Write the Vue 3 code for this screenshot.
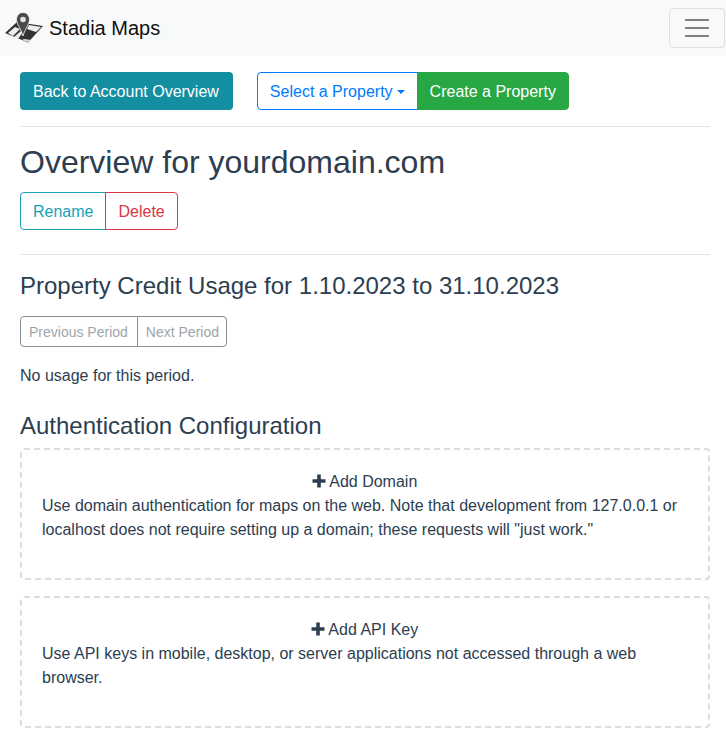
<script setup>
const cards = [
  { label: 'Add Domain', text: 'Use domain authentication for maps on the web. Note that development from 127.0.0.1 or localhost does not require setting up a domain; these requests will "just work."' },
  { label: 'Add API Key', text: 'Use API keys in mobile, desktop, or server applications not accessed through a web browser.' },
]
</script>

<template>
  <div class="page">
    <nav class="navbar">
      <a class="brand">
        <svg class="logo" width="40" height="34" viewBox="0 0 40 34">
          <path d="M13 11 L39 15 L24 31.500 L1 22 Z" fill="#333" />
          <path d="M4 22 L11 16 L16 18 L9 25 Z" fill="#eee" />
          <path d="M10 26 L17 20 L19 21 L14 28 Z" fill="#eee" />
          <path d="M25 14 L37 16 L32 21 L23 18 Z" fill="#eee" />
          <path d="M20 28 L27 29 L24 31 L18 29 Z" fill="#ddd" />
          <path d="M19 1.500 C15 1.500 12.500 5 12.500 8.500 C12.500 13 17 18 19 25 C21 18 25.500 13 25.500 8.500 C25.500 5 23 1.500 19 1.500 Z" fill="#4a4a4a" stroke="#f8f9fa" stroke-width="0.8" />
          <circle cx="19" cy="8.500" r="2.800" fill="#e4e4e4" />
        </svg>
        <span>Stadia Maps</span>
      </a>
      <button class="toggler" aria-label="Toggle navigation">
        <span class="bar"></span><span class="bar"></span><span class="bar"></span>
      </button>
    </nav>

    <main class="content">
      <div class="toolbar">
        <a class="btn btn-info">Back to Account Overview</a>
        <div class="group">
          <a class="btn btn-outline-primary">Select a Property<i class="caret"></i></a>
          <a class="btn btn-success">Create a Property</a>
        </div>
      </div>
      <hr />
      <h1>Overview for yourdomain.com</h1>
      <div class="group actions">
        <a class="btn btn-outline-info">Rename</a>
        <a class="btn btn-outline-danger">Delete</a>
      </div>
      <hr />
      <h3>Property Credit Usage for 1.10.2023 to 31.10.2023</h3>
      <div class="group periods">
        <a class="btn btn-sm btn-prev">Previous Period</a>
        <a class="btn btn-sm btn-next">Next Period</a>
      </div>
      <p class="empty">No usage for this period.</p>
      <h3 class="auth-title">Authentication Configuration</h3>
      <div v-for="card in cards" :key="card.label" class="dash">
        <div class="add">
          <svg class="plus" width="14" height="14" viewBox="0 0 14 14"><path d="M5.200 0.500h3.600v4.700h4.700v3.600H8.800v4.700H5.200V8.800H0.500V5.200h4.700z" fill="#2c3e50" /></svg>
          {{ card.label }}
        </div>
        <p>{{ card.text }}</p>
      </div>
    </main>
  </div>
</template>

<style>
html, body { margin: 0; background: #fff; }
</style>

<style scoped>
.page {
  font-family: "Liberation Sans", Arial, sans-serif;
  font-size: 16px;
  line-height: 24px;
  color: #2c3e50;
  height: 743px;
  overflow: hidden;
}
.navbar {
  height: 56px;
  background: #f8f9fa;
  display: flex;
  align-items: center;
  justify-content: space-between;
  padding: 0 1px 0 4px;
  box-sizing: border-box;
}
.brand {
  display: flex;
  align-items: center;
  gap: 5px;
  font-size: 20px;
  color: #111;
}
.logo { display: block; }
.toggler {
  width: 56px;
  height: 40px;
  border: 1px solid #dfdfdf;
  border-radius: 4px;
  background: transparent;
  display: flex;
  flex-direction: column;
  align-items: center;
  justify-content: center;
  gap: 6px;
  padding: 0;
  box-sizing: border-box;
}
.bar { width: 24px; height: 2px; background: #808080; }
.content { padding: 16px 16px 0 20px; }
.toolbar { display: flex; gap: 24px; }
.group { display: inline-flex; }
.btn {
  display: inline-block;
  box-sizing: border-box;
  height: 38px;
  padding: 7px 12px 5px;
  border: 1px solid transparent;
  border-radius: 4px;
  white-space: nowrap;
}
.group .btn:first-child { border-top-right-radius: 0; border-bottom-right-radius: 0; }
.group .btn:last-child { border-top-left-radius: 0; border-bottom-left-radius: 0; margin-left: -1px; }
.btn-info { background: #148ea1; color: #fff; padding-right: 13px; }
.btn-success { background: #28a745; border-color: #28a745; color: #fff; }
.btn-outline-primary { border-color: #007bff; color: #007bff; }
.btn-outline-info { border-color: #17a2b8; color: #17a2b8; }
.btn-outline-danger { border-color: #dc3545; color: #dc3545; }
.caret {
  display: inline-block;
  margin-left: 4px;
  vertical-align: 3px;
  border-top: 4px solid;
  border-left: 4px solid transparent;
  border-right: 4px solid transparent;
}
.btn-sm {
  height: 31px;
  padding: 5px 8px 3px;
  font-size: 14px;
  line-height: 21px;
  border-color: #868e96;
  color: #a0a5aa;
}
.btn-prev { padding-right: 9px; }
.btn-next { padding-right: 7px; }
hr { border: 0; border-top: 1px solid #e5e5e5; margin: 16px 0; }
h1 {
  margin: 0 0 11px;
  font-size: 32px;
  line-height: 38px;
  font-weight: 400;
}
h3 {
  margin: 0 0 8px;
  font-size: 24px;
  line-height: 29px;
  font-weight: 400;
}
.actions { margin-bottom: 24px; display: flex; width: fit-content; }
.periods { display: flex; width: fit-content; margin-top: 16px; }
.empty { margin: 17px 0 0; }
.auth-title { margin: 23px 0 8px; }
.dash {
  border: 2px dashed #ddd;
  border-radius: 4px;
  height: 132px;
  box-sizing: border-box;
  padding: 20px;
  margin-bottom: 16px;
}
.add { text-align: center; padding-right: 1px; }
.plus { vertical-align: -1px; }
.dash p { margin: 0; }
</style>
